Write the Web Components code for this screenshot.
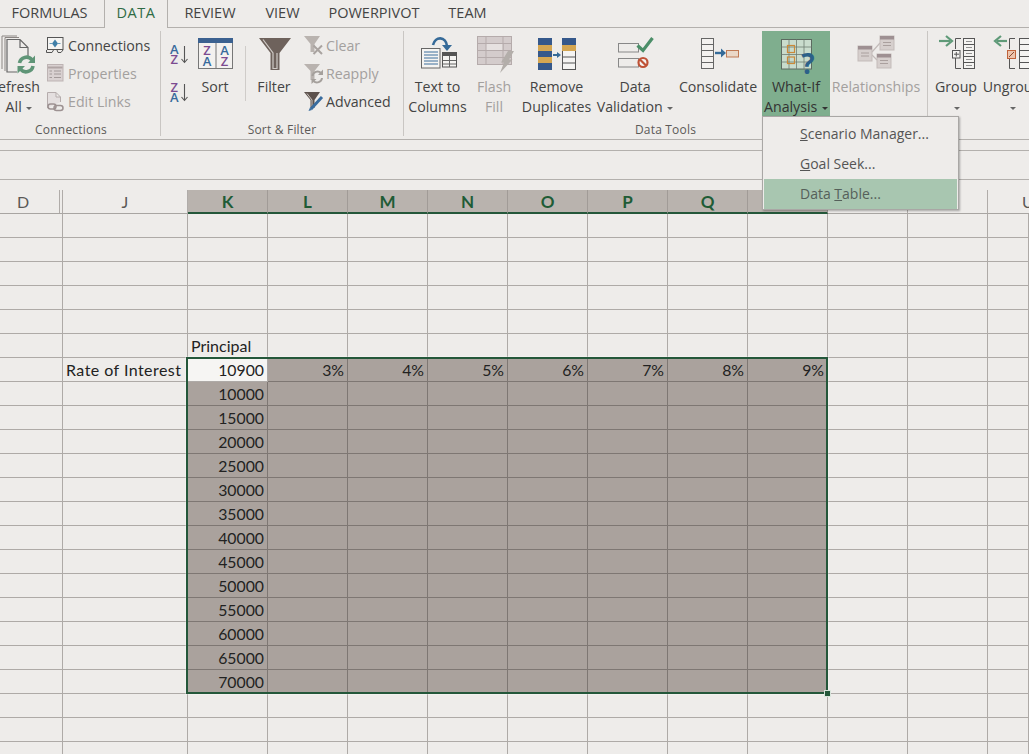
<!DOCTYPE html>
<html>
<head>
<meta charset="utf-8">
<title>Data Table</title>
<style>
    html, body { margin: 0; height: 754px; overflow: hidden; background: #eeeceA; }
    body { font-family: "Open Sans", "Liberation Sans", sans-serif; color: #444; }
    svg { display: block; }
    svg text { font-family: "Open Sans", sans-serif; font-weight: 600; }
</style>
</head>
<body>

<xl-tabs>
    <xl-tab w="104" style="padding-right:5px">FORMULAS</xl-tab>
    <xl-tab w="64" active>DATA</xl-tab>
    <xl-tab w="84">REVIEW</xl-tab>
    <xl-tab w="61">VIEW</xl-tab>
    <xl-tab w="122">POWERPIVOT</xl-tab>
    <xl-tab w="65">TEAM</xl-tab>
</xl-tabs>

<xl-ribbon>
    <xl-group w="179" label="Connections" style="margin-left:-18px">
        <xl-large w="44" style="margin-left:15px">
            <svg slot="icon" width="44" height="46" viewBox="-3 31 44 46" fill="none">
                <path d="M2 69V36H17M5 71V37.500H19" stroke="#8b8683" stroke-width="1"/>
                <path d="M17 72H7V39.500H20L28 47.500V56M20 39.500V47.500H28" stroke="#666" stroke-width="1.200" fill="#eeecea"/>
                <path d="M19.500 63A7 7 0 0 1 32 60" stroke="#5f9577" stroke-width="3.600"/>
                <path d="M33 66A7 7 0 0 1 20.500 69" stroke="#5f9577" stroke-width="3.600"/>
                <path d="M35 55.500V63H28ZM17.500 73.500V66H25Z" fill="#5f9577"/>
            </svg>
            <span>efresh</span><br><span>All <xl-caret></xl-caret></span>
        </xl-large>
        <xl-stack style="margin-left:5px">
            <xl-small>
                <svg slot="icon" width="20" height="28" viewBox="46 31 20 28" fill="none">
                    <rect x="47.500" y="37.500" width="15.500" height="12" fill="#f5f4f2" stroke="#555"/>
                    <path d="M46.500 50V52.500H52L53.500 50M57 50L58 52.500H61L63 50" stroke="#555"/>
                    <path d="M55 39.500L58 43.500L55 47.500L52 43.500Z" fill="#3f7fa8"/>
                    <path d="M49.500 43.500H52M58 43.500H60.500" stroke="#6b9dbb"/>
                </svg>
                Connections
            </xl-small>
            <xl-small disabled>
                <svg slot="icon" width="20" height="28" viewBox="46 59 20 28" fill="none">
                    <rect x="47.500" y="64.500" width="15.500" height="16.500" fill="#d9d1d1" stroke="#bdb3b3"/>
                    <path d="M48 67.500H62.500" stroke="#b0a5a5" stroke-width="2"/>
                    <path d="M54 71H61M54 74H61M54 77.500H61M49.500 71H52M49.500 74H52M49.500 77.500H52" stroke="#a39a9a"/>
                </svg>
                Properties
            </xl-small>
            <xl-small disabled>
                <svg slot="icon" width="20" height="28" viewBox="46 87 20 28" fill="none">
                    <path d="M47.500 108V92.500H56L60.500 97V102M56 92.500V97H60.500" stroke="#b5acac" fill="#e4dfdf"/>
                    <rect x="48" y="104" width="8" height="5" rx="2.500" stroke="#9d9292" stroke-width="1.500"/>
                    <rect x="54" y="105.500" width="9" height="5" rx="2.500" stroke="#9d9292" stroke-width="1.500"/>
                </svg>
                Edit Links
            </xl-small>
        </xl-stack>
    </xl-group>

    <xl-group w="243" label="Sort &amp; Filter">
        <svg width="33" height="85" viewBox="161 31 33 85" fill="none">
            <text x="170" y="54" font-size="13" fill="#386a9c">A</text>
            <text x="170.500" y="64" font-size="13" fill="#7c4b91">Z</text>
            <path d="M184.500 46V62M181.500 59L184.500 62.500L187.500 59" stroke="#555" stroke-width="1.100"/>
            <text x="170.500" y="92" font-size="13" fill="#7c4b91">Z</text>
            <text x="170" y="102" font-size="13" fill="#386a9c">A</text>
            <path d="M184.500 84V100M181.500 97L184.500 100.500L187.500 97" stroke="#555" stroke-width="1.100"/>
        </svg>
        <xl-large w="42">
            <svg slot="icon" width="42" height="46" viewBox="194 31 42 46" fill="none">
                <rect x="198.500" y="38.500" width="34" height="30" fill="#f3f1ef" stroke="#777"/>
                <rect x="198" y="38" width="35" height="5" fill="#3b6190"/>
                <path d="M216 43V68" stroke="#777"/>
                <text x="207" y="55" font-size="13" text-anchor="middle" fill="#7c4b91">Z</text>
                <text x="207" y="66" font-size="13" text-anchor="middle" fill="#386a9c">A</text>
                <text x="224.500" y="55" font-size="13" text-anchor="middle" fill="#386a9c">A</text>
                <text x="224.500" y="66" font-size="13" text-anchor="middle" fill="#7c4b91">Z</text>
            </svg>
            Sort
        </xl-large>
        <xl-vsep></xl-vsep>
        <xl-large w="50">
            <svg slot="icon" width="50" height="46" viewBox="249 31 50 46" fill="none">
                <path d="M259 38H291L279.500 53V70H270.500V53Z" fill="#6e625c"/>
                <path d="M263 39.500L273 53V68.500H277V53" stroke="#cfcac6" stroke-width="1.200"/>
            </svg>
            Filter
        </xl-large>
        <xl-stack style="margin-left:5px">
            <xl-small disabled>
                <svg slot="icon" width="20" height="28" viewBox="304 31 20 28" fill="none">
                    <path d="M304 36H320L314.500 44V52H310.500V44Z" fill="#b9b3af"/>
                    <path d="M313.500 45.500L322 54M322 45.500L313.500 54" stroke="#a9a3a0" stroke-width="2"/>
                </svg>
                Clear
            </xl-small>
            <xl-small disabled>
                <svg slot="icon" width="20" height="28" viewBox="304 59 20 28" fill="none">
                    <path d="M304 64H320L314.500 71V80H310.500V71Z" fill="#b9b3af"/>
                    <path d="M312.500 76A5 5 0 0 1 321 73M322 78A5 5 0 0 1 313.500 81" stroke="#a5a09c" stroke-width="2"/>
                    <path d="M323 69.500V75H318ZM311.500 84V79H316.500Z" fill="#a5a09c"/>
                </svg>
                Reapply
            </xl-small>
            <xl-small>
                <svg slot="icon" width="20" height="28" viewBox="304 87 20 28" fill="none">
                    <path d="M304 92H320L314.500 100V108H310.500V100Z" fill="#5d524d"/>
                    <path d="M307 93.500L312 100V106.500" stroke="#c9c3bf"/>
                    <path d="M322 97L311 109" stroke="#396c9e" stroke-width="3"/>
                    <path d="M310 107.500L308.500 111L312 110Z" fill="#396c9e"/>
                </svg>
                Advanced
            </xl-small>
        </xl-stack>
    </xl-group>

    <xl-group w="524" label="Data Tools">
        <xl-large w="67">
            <svg slot="icon" width="67" height="46" viewBox="404 31 67 46" fill="none">
                <rect x="421.500" y="48.500" width="18.500" height="19.500" fill="#f5f4f2" stroke="#666"/>
                <path d="M424 52H438M424 55H438M424 58H438M424 61H438M424 64H438" stroke="#3d6f9c"/>
                <rect x="442.500" y="52.500" width="14" height="14.500" fill="#f5f4f2" stroke="#555"/>
                <path d="M442.500 54.500H456.500" stroke="#555" stroke-width="3"/>
                <path d="M449.500 56V67M443 60.500H456M443 64H456" stroke="#666"/>
                <path d="M433 45C435 36 446 36 447 46" stroke="#356a98" stroke-width="2.600"/>
                <path d="M442 45H452L447 51Z" fill="#356a98"/>
            </svg>
            Text to<br>Columns
        </xl-large>
        <xl-large w="46" disabled>
            <svg slot="icon" width="46" height="46" viewBox="471 31 46 46" fill="none">
                <rect x="477.500" y="36.500" width="34" height="28" fill="#d4cccc" stroke="#b5abab"/>
                <path d="M477.500 43.500H511.500M477.500 50.500H511.500M477.500 57.500H511.500M486 36.500V43.500M503 36.500V64.500M486 50.500V64.500" stroke="#b5abab"/>
                <rect x="486" y="43.500" width="17" height="7" fill="#e6e1e0" stroke="#b5abab"/>
                <path d="M508 51H514L509 59.500H512.500L500 73L504 62.500H501Z" fill="#b3aeaa"/>
            </svg>
            Flash<br>Fill
        </xl-large>
        <xl-large w="79">
            <svg slot="icon" width="79" height="46" viewBox="517 31 79 46" fill="none">
                <rect x="538" y="38" width="14" height="32" fill="#35588b"/>
                <rect x="538" y="45" width="14" height="6" fill="#d4a652"/>
                <rect x="538" y="57" width="14" height="6" fill="#d4a652"/>
                <rect x="562.500" y="38.500" width="13" height="31" fill="#f5f4f2" stroke="#555"/>
                <rect x="562" y="38" width="14" height="7" fill="#35588b"/>
                <rect x="562" y="45" width="14" height="6" fill="#d4a652"/>
                <path d="M562.500 57H576M562.500 63H576" stroke="#555"/>
                <path d="M553 55H558" stroke="#356a98" stroke-width="2"/>
                <path d="M557 52L561 55L557 58Z" fill="#356a98"/>
            </svg>
            Remove<br>Duplicates
        </xl-large>
        <xl-large w="78">
            <svg slot="icon" width="78" height="46" viewBox="596 31 78 46" fill="none">
                <rect x="618.500" y="43.500" width="20" height="8.500" stroke="#888"/>
                <rect x="618.500" y="58.500" width="20" height="8.500" stroke="#888"/>
                <path d="M637.500 45.500L643 50.500L652.500 38" stroke="#4b8e68" stroke-width="3.200"/>
                <circle cx="643" cy="62.500" r="4.500" fill="#f5f4f2" stroke="#bf5236" stroke-width="2.200"/>
                <path d="M640 59.500L646 65.500" stroke="#bf5236" stroke-width="2.200"/>
            </svg>
            Data<br><span>Validation <xl-caret></xl-caret></span>
        </xl-large>
        <xl-large w="88">
            <svg slot="icon" width="88" height="46" viewBox="674 31 88 46" fill="none">
                <rect x="701.500" y="38.500" width="12" height="30" fill="#f3f1ef" stroke="#666"/>
                <path d="M701.500 44.500H713.500M701.500 50.500H713.500M701.500 56.500H713.500M701.500 62.500H713.500" stroke="#666"/>
                <path d="M715 53H722" stroke="#356a98" stroke-width="2.400"/>
                <path d="M721 48.500L726 53L721 57.500Z" fill="#356a98"/>
                <rect x="726.500" y="50.500" width="12" height="6.500" fill="#ead8c8" stroke="#c07a55"/>
            </svg>
            Consolidate
        </xl-large>
        <xl-large w="68" active>
            <svg slot="icon" width="68" height="46" viewBox="762 31 68 46" fill="none">
                <rect x="781.500" y="39.500" width="30" height="29.500" fill="#c9dccd" stroke="#5c6a60"/>
                <path d="M789 39.500V69M796.500 39.500V69M804 39.500V69M781.500 47H811.500M781.500 54.500H811.500M781.500 62H811.500" stroke="#6e7d72" stroke-width=".8"/>
                <rect x="787.500" y="45.500" width="7" height="7" stroke="#c98a3a" stroke-width="1.200"/>
                <rect x="787.500" y="57" width="7" height="6.500" stroke="#c98a3a" stroke-width="1.200"/>
                <text x="808" y="74" font-size="28" text-anchor="middle" fill="#2c6189" style="font-weight:700">?</text>
            </svg>
            What-If<br><span>Analysis <xl-caret dark></xl-caret></span>
        </xl-large>
        <xl-large w="92" disabled>
            <svg slot="icon" width="92" height="46" viewBox="830 31 92 46" fill="none">
                <path d="M872 52L880 43M872 55L877 60" stroke="#c2bbb9" stroke-width="1.200"/>
                <g fill="#d6cfcd" stroke="#c3bbb9">
                    <rect x="858" y="46" width="14" height="15"/>
                    <rect x="880" y="36" width="14" height="14"/>
                    <rect x="877" y="54" width="14" height="14"/>
                </g>
                <g fill="#9e9092">
                    <rect x="858" y="46" width="14" height="3.500"/>
                    <rect x="880" y="36" width="14" height="3.500"/>
                    <rect x="877" y="54" width="14" height="3.500"/>
                </g>
                <path d="M861 53H869M861 56H869M883 42.500H891M883 45.500H891M880 60.500H888M880 63.500H888" stroke="#aaa09e"/>
            </svg>
            Relationships
        </xl-large>
    </xl-group>

    <xl-group w="112" plain>
        <xl-large w="56">
            <svg slot="icon" width="56" height="46" viewBox="928 31 56 46" fill="none">
                <path d="M939 41H950" stroke="#5f9a78" stroke-width="2.200"/>
                <path d="M946 36L952 41L946 46" stroke="#5f9a78" stroke-width="2.200"/>
                <path d="M961 38.500H955.500V49M955.500 58V68.500H961" stroke="#555"/>
                <rect x="952.500" y="50.500" width="7.500" height="7.500" fill="#f5f4f2" stroke="#555"/>
                <path d="M954 54.200H959M956.300 52V56.500" stroke="#555"/>
                <rect x="963.500" y="38.500" width="11" height="30" fill="#f5f4f2" stroke="#555"/>
                <path d="M963.500 44.500H974.500M963.500 50.500H974.500M963.500 56.500H974.500M963.500 62.500H974.500" stroke="#555"/>
                <path d="M966 41.500H972M966 47.500H972M966 53.500H972M966 59.500H972M966 65.500H972" stroke="#777" stroke-width=".8"/>
            </svg>
            Group<br><xl-caret></xl-caret>
        </xl-large>
        <xl-large w="56">
            <svg slot="icon" width="56" height="46" viewBox="984 31 56 46" fill="none">
                <path d="M997 41H1007" stroke="#5f9a78" stroke-width="2.200"/>
                <path d="M1001 36L995 41L1001 46" stroke="#5f9a78" stroke-width="2.200"/>
                <path d="M1015 38.500H1009.500V49M1009.500 58V68.500H1015" stroke="#555"/>
                <rect x="1007.500" y="50.500" width="8" height="8" fill="#ecc4ad" stroke="#c0623a"/>
                <path d="M1009 57L1014 52" stroke="#8a4a30"/>
                <rect x="1019.500" y="38.500" width="11" height="30" fill="#f5f4f2" stroke="#555"/>
                <path d="M1019.500 44.500H1030.500M1019.500 50.500H1030.500M1019.500 56.500H1030.500M1019.500 62.500H1030.500" stroke="#555"/>
            </svg>
            Ungroup<br><xl-caret></xl-caret>
        </xl-large>
    </xl-group>
</xl-ribbon>

<xl-formula-bar></xl-formula-bar>
<xl-sheet></xl-sheet>

<xl-menu>
    <xl-menu-item><u>S</u>cenario Manager...</xl-menu-item>
    <xl-menu-item><u>G</u>oal Seek...</xl-menu-item>
    <xl-menu-item active>Data <u>T</u>able...</xl-menu-item>
</xl-menu>

<script>
class XlTabs extends HTMLElement {
    connectedCallback() {
        if (this.shadowRoot) return;
        this.attachShadow({mode: 'open'});
        this.shadowRoot.innerHTML = `
            <style>
                :host { display: flex; height: 27px; border-bottom: 1px solid #b3b0ad; }
            </style>
            <slot></slot>`;
    }
}

class XlTab extends HTMLElement {
    connectedCallback() {
        if (this.shadowRoot) return;
        this.attachShadow({mode: 'open'});
        this.style.width = this.getAttribute('w') + 'px';
        this.shadowRoot.innerHTML = `
            <style>
                :host { display: block; flex: none; box-sizing: border-box; height: 28px; text-align: center; font-size: 14.500px; line-height: 26px; color: #444; white-space: nowrap; }
                :host([active]) { color: #2f6b45; background: #eeecea; border: 1px solid #b3b0ad; border-top: 0; border-bottom: 0; letter-spacing: .5px; }
            </style>
            <slot></slot>`;
    }
}

class XlRibbon extends HTMLElement {
    connectedCallback() {
        if (this.shadowRoot) return;
        this.attachShadow({mode: 'open'});
        this.shadowRoot.innerHTML = `
            <style>
                :host { display: flex; height: 111px; overflow: hidden; border-bottom: 1px solid #b3b0ad; }
            </style>
            <slot></slot>`;
    }
}

class XlGroup extends HTMLElement {
    connectedCallback() {
        if (this.shadowRoot) return;
        this.attachShadow({mode: 'open'});
        this.style.width = this.getAttribute('w') + 'px';
        let label = this.getAttribute('label') || '';
        this.shadowRoot.innerHTML = `
            <style>
                :host { display: block; box-sizing: border-box; padding-top: 3px; flex: none; }
                .wrap { box-sizing: border-box; height: 105px; border-right: 1px solid #c9c6c3; }
                :host([plain]) .wrap { border-right: 0; }
                .body { display: flex; height: 85px; }
                .label { text-align: center; font-size: 12px; line-height: 18px; margin-top: 5px; color: #5c5a58; letter-spacing: .2px; }
            </style>
            <div class="wrap">
                <div class="body"><slot></slot></div>
                <div class="label">${label}</div>
            </div>`;
    }
}

class XlLarge extends HTMLElement {
    connectedCallback() {
        if (this.shadowRoot) return;
        this.attachShadow({mode: 'open'});
        this.style.width = this.getAttribute('w') + 'px';
        this.shadowRoot.innerHTML = `
            <style>
                :host { display: block; flex: none; height: 85px; text-align: center; font-size: 14.200px; line-height: 20px; color: #444; white-space: nowrap; }
                :host([disabled]) { color: #a3a09e; }
                :host([active]) { background: #7fae8e; color: #333; }
                .icon { height: 46px; }
                .text { display: block; margin: 0 -8px; }
            </style>
            <div class="icon"><slot name="icon"></slot></div>
            <div class="text"><slot></slot></div>`;
    }
}

class XlStack extends HTMLElement {
    connectedCallback() {
        if (this.shadowRoot) return;
        this.attachShadow({mode: 'open'});
        this.shadowRoot.innerHTML = `
            <style>:host { display: block; flex: none; }</style>
            <slot></slot>`;
    }
}

class XlSmall extends HTMLElement {
    connectedCallback() {
        if (this.shadowRoot) return;
        this.attachShadow({mode: 'open'});
        this.shadowRoot.innerHTML = `
            <style>
                :host { display: flex; align-items: center; gap: 2px; height: 28px; font-size: 14.200px; color: #444; white-space: nowrap; }
                :host([disabled]) { color: #a3a09e; }
            </style>
            <slot name="icon"></slot><slot></slot>`;
    }
}

class XlVsep extends HTMLElement {
    connectedCallback() {
        if (this.shadowRoot) return;
        this.attachShadow({mode: 'open'});
        this.shadowRoot.innerHTML = `
            <style>
                :host { display: block; flex: none; width: 13px; }
                div { width: 1px; height: 55px; margin: 15px 0 0 9px; background: #cfccc9; }
            </style>
            <div></div>`;
    }
}

class XlCaret extends HTMLElement {
    connectedCallback() {
        if (this.shadowRoot) return;
        this.attachShadow({mode: 'open'});
        this.shadowRoot.innerHTML = `
            <style>
                :host { display: inline-block; width: 0; height: 0; vertical-align: middle; border: 3px solid transparent; border-top: 3px solid #666; border-bottom: 0; margin-left: 1px; }
                :host([dark]) { border-top-color: #333; }
            </style>`;
    }
}

class XlFormulaBar extends HTMLElement {
    connectedCallback() {
        if (this.shadowRoot) return;
        this.attachShadow({mode: 'open'});
        this.shadowRoot.innerHTML = `
            <style>
                :host { display: block; }
                .gap { height: 10px; border-bottom: 1px solid #b3b0ad; }
                .bar { height: 28px; border-bottom: 1px solid #b3b0ad; }
                .pad { height: 10px; }
            </style>
            <div class="gap"></div><div class="bar"></div><div class="pad"></div>`;
    }
}

class XlSheet extends HTMLElement {
    connectedCallback() {
        if (this.shadowRoot) return;
        this.attachShadow({mode: 'open'});
        // R, S and T sit behind the open menu, so only their boxes are drawn
        let cols = ['D', 'J', 'K', 'L', 'M', 'N', 'O', 'P', 'Q', 'R', 'S', 'T', 'U'];
        let hidden = ['R', 'S', 'T'];
        let html = '';
        cols.forEach((c, i) => {
            let sel = i >= 2 && i <= 9;
            html += `<div class="head ${sel ? 'sel' : ''} col-${c}">${hidden.includes(c) ? '' : c}</div>`;
        });
        for (let r = 0; r < 23; r++) {
            cols.forEach((c, i) => {
                let sel = r >= 6 && r <= 19 && i >= 2 && i <= 9;
                let cls = 'cell' + (sel ? ' sel' : '');
                let text = '';
                if (r === 5 && c === 'K') { text = 'Principal'; cls += ' left'; }
                if (r === 6 && c === 'J') { text = 'Rate of Interest'; cls += ' left wide'; }
                if (r === 6 && c === 'K') { text = '10900'; cls = 'cell active'; }
                if (r === 6 && i >= 3 && i <= 9) { text = i + '%'; }
                if (r >= 7 && r <= 19 && c === 'K') { text = String(10000 + (r - 7) * 5000); }
                html += `<div class="${cls}">${text}</div>`;
            });
        }
        this.shadowRoot.innerHTML = `
            <style>
                :host { display: block; position: relative; height: 564px; overflow: hidden; font-family: Lato, "Liberation Sans", sans-serif; color: #222; }
                .grid { display: grid; grid-template-columns: 63px 125px repeat(10, 80px) 41px; grid-auto-rows: 24px; }
                .head { box-sizing: border-box; border-right: 1px solid #b0aca9; border-bottom: 1px solid #a8a5a2; text-align: center; font-size: 16px; line-height: 23px; color: #5a5856; }
                .col-D { padding-right: 16px; box-shadow: inset -2px 0 0 #eeecea, inset -3px 0 0 #b0aca9; }
                .col-U { padding-left: 34px; border-right: 0; text-align: left; overflow: hidden; }
                .head.sel { background: #b9b3ae; color: #1f5c36; font-weight: 700; font-size: 17px; border-right-color: #a19b97; border-bottom: 2px solid #24573a; }
                .cell { box-sizing: border-box; border-right: 1px solid #aeaaa7; border-bottom: 1px solid #aeaaa7; padding: 0 3px 0 2px; text-align: right; font-size: 15.800px; line-height: 24px; white-space: nowrap; }
                .cell.left { text-align: left; padding-left: 3px; font-size: 16px; overflow: visible; }
                .cell.wide { letter-spacing: .45px; }
                .cell.sel { background: #aaa29d; border-color: #7e7773; }
                .cell.active { background: #f6f5f3; border-color: #aeaaa7; }
                .range { position: absolute; box-sizing: border-box; left: 186px; top: 167px; width: 642px; height: 337px; border: 2px solid #24573a; outline: 1px solid rgba(255,255,255,.25); pointer-events: none; }
                .handle { position: absolute; right: -5px; bottom: -5px; width: 5px; height: 5px; background: #24573a; border: 1px solid #d9e5dc; }
            </style>
            <div class="grid">${html}</div>
            <div class="range"><div class="handle"></div></div>`;
    }
}

class XlMenu extends HTMLElement {
    connectedCallback() {
        if (this.shadowRoot) return;
        this.attachShadow({mode: 'open'});
        this.shadowRoot.innerHTML = `
            <style>
                :host { display: block; position: absolute; left: 762px; top: 116px; box-sizing: border-box; width: 197px; height: 94px; padding: 2px 1px; background: #eeecea; border: 1px solid #a9a7a5; box-shadow: 1px 1px 2px rgba(0,0,0,.3); }
            </style>
            <slot></slot>`;
    }
}

class XlMenuItem extends HTMLElement {
    connectedCallback() {
        if (this.shadowRoot) return;
        this.attachShadow({mode: 'open'});
        this.shadowRoot.innerHTML = `
            <style>
                :host { display: block; height: 30px; padding-left: 36px; font-size: 14px; line-height: 30px; color: #555; white-space: nowrap; }
                :host([active]) { background: #a8c6b0; color: #55605a; }
            </style>
            <slot></slot>`;
    }
}

customElements.define('xl-tabs', XlTabs);
customElements.define('xl-tab', XlTab);
customElements.define('xl-ribbon', XlRibbon);
customElements.define('xl-group', XlGroup);
customElements.define('xl-large', XlLarge);
customElements.define('xl-stack', XlStack);
customElements.define('xl-small', XlSmall);
customElements.define('xl-vsep', XlVsep);
customElements.define('xl-caret', XlCaret);
customElements.define('xl-formula-bar', XlFormulaBar);
customElements.define('xl-sheet', XlSheet);
customElements.define('xl-menu', XlMenu);
customElements.define('xl-menu-item', XlMenuItem);
</script>
</body>
</html>
